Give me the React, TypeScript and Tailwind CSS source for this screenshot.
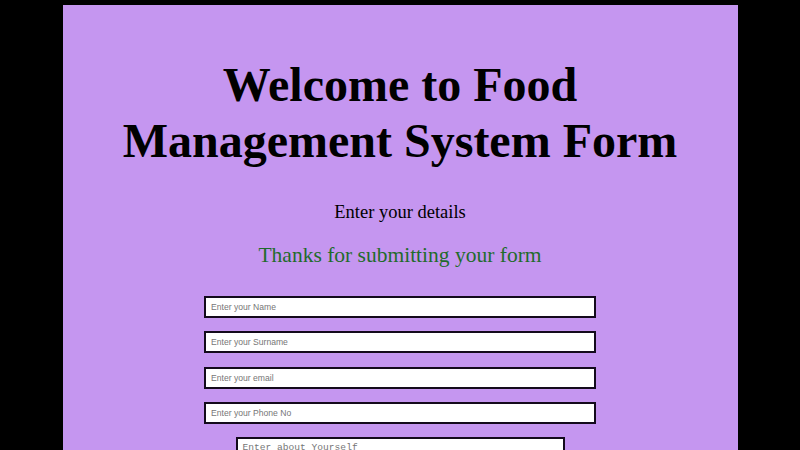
import React from 'react';

const fields = ['Enter your Name', 'Enter your Surname', 'Enter your email', 'Enter your Phone No'];

export default function App() {
  return (
    <div className="min-h-[450px] bg-black pt-[5px]">
      <div className="mx-auto w-[675px] min-h-[445px] bg-[#c596f0] pt-[52px] text-center font-['Liberation_Serif',serif]">
        <h1 className="text-[48px] font-bold leading-[56px] text-black">
          Welcome to Food
          <br />
          Management System Form
        </h1>
        <p className="mt-[32px] text-[18.5px] leading-[22px] text-black">Enter your details</p>
        <p className="mt-[19px] text-[21.5px] leading-[26px] text-[#1f6b2b]">Thanks for submitting your form</p>

        <form className="mt-[28px] flex flex-col items-center gap-[13.3px]">
          {fields.map((f) => (
            <input
              key={f}
              type="text"
              placeholder={f}
              className="h-[22px] w-[392px] border-2 border-[#140a1c] bg-white px-[5px] font-['Liberation_Sans',sans-serif] text-[8.6px] text-black placeholder:text-[#767676] outline-none"
            />
          ))}
          <textarea
            placeholder="Enter about Yourself"
            className="h-[80px] w-[329px] resize-none border-2 border-[#140a1c] bg-white px-[5px] py-[2px] font-['Liberation_Mono',monospace] text-[9.6px] text-black placeholder:text-[#767676] outline-none"
          />
        </form>
      </div>
    </div>
  );
}
